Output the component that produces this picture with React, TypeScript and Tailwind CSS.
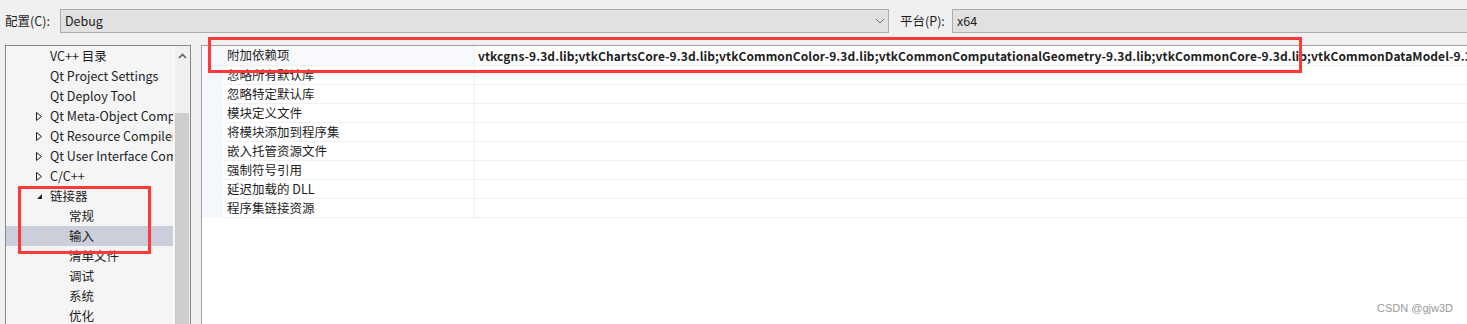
const font = { fontFamily: '"Noto Sans CJK SC", "Noto Sans", sans-serif' };

type TreeItem = { label: string; indent: 'top' | 'child'; arrow?: 'closed' | 'open'; selected?: boolean };

const treeItems: TreeItem[] = [
  { label: 'VC++ 目录', indent: 'top' },
  { label: 'Qt Project Settings', indent: 'top' },
  { label: 'Qt Deploy Tool', indent: 'top' },
  { label: 'Qt Meta-Object Compiler', indent: 'top', arrow: 'closed' },
  { label: 'Qt Resource Compiler', indent: 'top', arrow: 'closed' },
  { label: 'Qt User Interface Compiler', indent: 'top', arrow: 'closed' },
  { label: 'C/C++', indent: 'top', arrow: 'closed' },
  { label: '链接器', indent: 'top', arrow: 'open' },
  { label: '常规', indent: 'child' },
  { label: '输入', indent: 'child', selected: true },
  { label: '清单文件', indent: 'child' },
  { label: '调试', indent: 'child' },
  { label: '系统', indent: 'child' },
  { label: '优化', indent: 'child' },
];

const props = [
  '附加依赖项',
  '忽略所有默认库',
  '忽略特定默认库',
  '模块定义文件',
  '将模块添加到程序集',
  '嵌入托管资源文件',
  '强制符号引用',
  '延迟加载的 DLL',
  '程序集链接资源',
];

const deps =
  'vtkcgns-9.3d.lib;vtkChartsCore-9.3d.lib;vtkCommonColor-9.3d.lib;vtkCommonComputationalGeometry-9.3d.lib;vtkCommonCore-9.3d.lib;vtkCommonDataModel-9.3d.lib;vtkCommonExecutionModel-9.3d.lib;vtkCommonMath-9.3d.lib';

function Arrow({ kind }: { kind?: 'closed' | 'open' }) {
  if (kind === 'closed')
    return (
      <svg width="6" height="9" viewBox="0 0 6 9" className="shrink-0">
        <path d="M0.5 0.5 L5.5 4.5 L0.5 8.5 Z" fill="none" stroke="#222" strokeWidth="1" />
      </svg>
    );
  if (kind === 'open')
    return (
      <svg width="6" height="9" viewBox="0 0 6 9" className="shrink-0">
        <path d="M6 2 L6 7 L1 7 Z" fill="#222" />
      </svg>
    );
  return null;
}

export default function App() {
  return (
    <div className="relative w-[1467px] h-[324px] overflow-hidden bg-[#f0f0f0] text-[#1e1e1e]" style={font}>
      {/* top: configuration / platform */}
      <div className="flex items-center h-[45px] pt-[9px] pb-[12px]">
        <span className="w-[60px] pl-[5px] text-[12.5px]">配置(C):</span>
        <div className="flex items-center justify-between w-[829px] h-[24px] border border-[#adadad] bg-[#e1e1e1] pl-[4px] pr-[3px] text-[12.5px]">
          <span>Debug</span>
          <svg width="10" height="6" viewBox="0 0 10 6">
            <path d="M1 1 L5 5 L9 1" fill="none" stroke="#707070" strokeWidth="1" />
          </svg>
        </div>
        <span className="w-[63px] pl-[11px] text-[12.5px]">平台(P):</span>
        <div className="flex items-center flex-1 h-[24px] border border-[#adadad] border-r-0 bg-[#e1e1e1] pl-[4px] text-[12.5px]">
          x64
        </div>
      </div>

      <div className="flex h-[279px]">
        {/* left tree */}
        <div className="ml-[5px] w-[186px] h-[300px] flex border border-[#828790] bg-[#f5f5f5]">
          <div className="flex-1 min-w-0 overflow-hidden">
            {treeItems.map((it) => (
              <div
                key={it.label}
                className={`flex items-center h-[20px] whitespace-nowrap text-[12.5px] ${it.selected ? 'bg-[#cccedb]' : ''}`}
              >
                <span className={`flex shrink-0 ${it.indent === 'top' ? 'pl-[30px] w-[44px]' : 'w-[63px]'}`}>
                  {it.indent === 'top' && <Arrow kind={it.arrow} />}
                </span>
                <span>{it.label}</span>
              </div>
            ))}
          </div>
          <div className="w-[17px] shrink-0 border-l border-white bg-[#f0f0f0] flex flex-col">
            <div className="h-[20px] flex items-center justify-center">
              <svg width="9" height="6" viewBox="0 0 9 6">
                <path d="M1 5 L4.5 1.5 L8 5" fill="none" stroke="#606060" strokeWidth="1.6" />
              </svg>
            </div>
            <div className="h-[47px]" />
            <div className="flex-1 mx-[1px] bg-[#cdcdcd]" />
          </div>
        </div>

        {/* right property grid */}
        <div className="ml-[10px] flex-1 h-[300px] border-l border-t border-[#a0a0a0] bg-white">
          <div className="flex">
            <div className="w-[21px] h-[171px] bg-[#f4f7fc]" />
            <div className="flex-1 min-w-0">
              {props.map((p, i) => (
                <div key={p} className={`flex items-center border-b border-[#f0f0f0] ${i === 0 ? 'h-[20px]' : 'h-[19px]'}`}>
                  <div className={`w-[252px] h-full flex items-center pl-[4px] text-[12.5px] border-r border-[#f0f0f0] ${i === 0 ? 'bg-[#f7f9fd]' : ''}`}>
                    {p}
                  </div>
                  <div className="flex-1 min-w-0 overflow-hidden whitespace-nowrap pl-[3px] text-[12px] font-bold tracking-[0.08px]">
                    {i === 0 ? deps : ''}
                  </div>
                </div>
              ))}
            </div>
          </div>
        </div>
      </div>

      {/* annotations */}
      <div className="absolute left-[208px] top-[37px] w-[1094px] h-[36px] border-[3px] border-[#ff3838]" />
      <div className="absolute left-[18px] top-[186px] w-[133px] h-[68px] border-[3px] border-[#ff3838]" />
      <div className="absolute right-[14px] bottom-[8px] text-[11px] text-[#9a9a9a]" style={{ fontFamily: '"Liberation Sans", sans-serif' }}>
        CSDN @gjw3D
      </div>
    </div>
  );
}
